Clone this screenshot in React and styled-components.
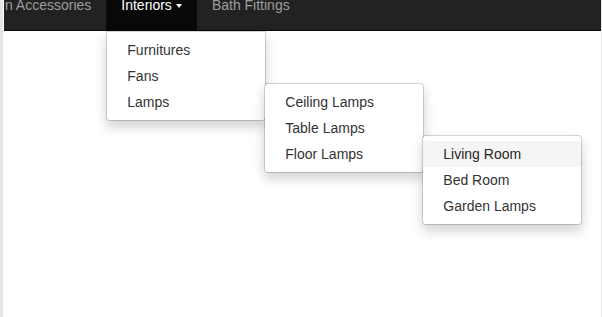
import React from 'react';
import styled, { createGlobalStyle } from 'styled-components';

const GlobalStyle = createGlobalStyle`
    html, body {
        margin: 0;
        padding: 0;
        background: #fff;
        overflow: hidden;
    }
    body {
        font-family: "Liberation Sans", Arial, Helvetica, sans-serif;
        font-size: 14px;
        line-height: 20px;
        color: #333;
    }
`;

const menu = [
    { label: 'Kitchen Accessories' },
    {
        label: 'Interiors',
        open: true,
        children: [
            { label: 'Furnitures' },
            { label: 'Fans' },
            {
                label: 'Lamps',
                open: true,
                children: [
                    { label: 'Ceiling Lamps' },
                    { label: 'Table Lamps' },
                    {
                        label: 'Floor Lamps',
                        open: true,
                        children: [
                            { label: 'Living Room', hover: true },
                            { label: 'Bed Room' },
                            { label: 'Garden Lamps' },
                        ],
                    },
                ],
            },
        ],
    },
    { label: 'Bath Fittings' },
];

function SubMenu({ items, nested }) {
    return <DropdownMenu nested={nested}>
        {items.map(item => (
            <DropdownItem key={item.label}>
                <DropdownLink href="#" hover={item.hover} onClick={e => e.preventDefault()}>
                    {item.label}
                </DropdownLink>
                {item.open && item.children && <SubMenu items={item.children} nested />}
            </DropdownItem>
        ))}
    </DropdownMenu>
}

export default function App() {
    return <Page>
        <GlobalStyle />
        <Navbar>
            <NavList>
                {menu.map(item => (
                    <NavItem key={item.label}>
                        <NavLink href="#" active={item.open} onClick={e => e.preventDefault()}>
                            {item.label}
                            {item.children && <Caret />}
                        </NavLink>
                        {item.open && item.children && <SubMenu items={item.children} />}
                    </NavItem>
                ))}
            </NavList>
        </Navbar>
    </Page>
}

const Page = styled.div`
    display: flow-root;
    box-sizing: border-box;
    width: 602px;
    height: 317px;
    border-left: 3px solid #e6e6e6;
    border-right: 1px solid #e6e6e6;
    padding-left: 1px;
    background: #fff;
`;

const Navbar = styled.nav`
    margin-top: -20px;
    height: 50px;
    background-color: #222;
    border-bottom: 1px solid #080808;
    overflow-x: clip;
    position: relative;
    z-index: 10;
`;

const NavList = styled.ul`
    display: flex;
    list-style: none;
    margin: 0 0 0 -53px;
    padding: 0;
    height: 50px;
`;

const NavItem = styled.li`
    position: relative;
`;

const NavLink = styled.a`
    display: flex;
    align-items: center;
    padding: 15px 15px;
    line-height: 20px;
    color: ${props => props.active ? '#fff' : '#9d9d9d'};
    background-color: ${props => props.active ? '#080808' : 'transparent'};
    text-decoration: none;
    white-space: nowrap;
`;

const Caret = styled.span`
    display: inline-block;
    width: 0;
    height: 0;
    margin-left: 4px;
    margin-top: 1px;
    border-top: 4px solid;
    border-right: 3.5px solid transparent;
    border-left: 3.5px solid transparent;
`;

const DropdownMenu = styled.ul`
    position: absolute;
    top: ${props => props.nested ? '0' : 'calc(100% + 1px)'};
    left: ${props => props.nested ? '100%' : '0'};
    margin: ${props => props.nested ? '-6px 0 0 -1px' : '0'};
    box-sizing: border-box;
    min-width: 160px;
    padding: 5px 0;
    list-style: none;
    background-color: #fff;
    border: 1px solid rgba(0, 0, 0, 0.15);
    border-radius: ${props => props.nested ? '4px' : '0 0 4px 4px'};
    box-shadow: 0 6px 12px rgba(0, 0, 0, 0.175);
    background-clip: padding-box;
`;

const DropdownItem = styled.li`
    position: relative;
`;

const DropdownLink = styled.a`
    display: block;
    padding: 3px 20px;
    line-height: 20px;
    color: ${props => props.hover ? '#262626' : '#333'};
    background-color: ${props => props.hover ? '#f5f5f5' : 'transparent'};
    text-decoration: none;
    white-space: nowrap;
`;
